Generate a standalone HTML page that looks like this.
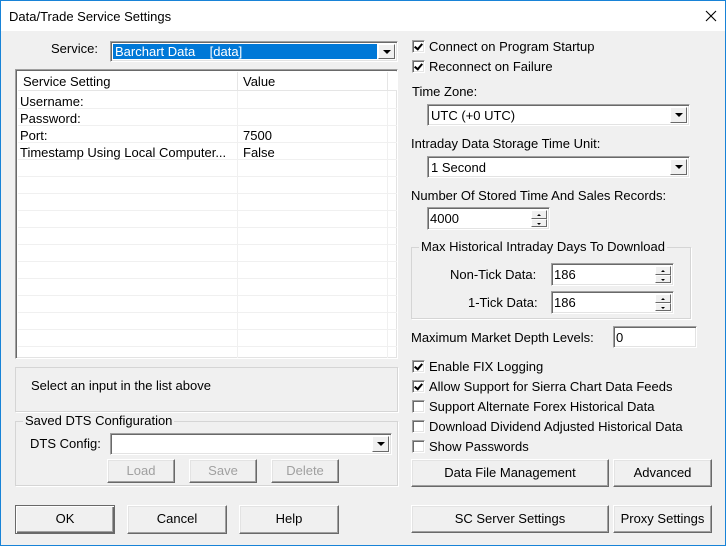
<!DOCTYPE html>
<html><head><style>
*{box-sizing:border-box;margin:0;padding:0}
body{width:726px;height:546px;background:#f0f0f0;font-family:"Liberation Sans",sans-serif;font-size:13px;color:#000;position:relative;overflow:hidden}
.a{position:absolute;white-space:nowrap}
.frame{position:absolute;left:0;top:0;width:726px;height:546px;border:1px solid #1883d7;border-top:none;pointer-events:none}
.title{position:absolute;left:0;top:0;width:726px;height:31px;background:#fff;border-top:1px solid #1883d7}
.sunk{position:absolute;background:#fff;border-top:1px solid #a0a0a0;border-left:1px solid #a0a0a0;border-bottom:1px solid #fff;border-right:1px solid #fff;box-shadow:inset 1px 1px 0 #696969,inset -1px -1px 0 #e3e3e3}
.arrow{position:absolute;right:2px;top:2px;bottom:2px;width:17px;background:#f0f0f0;border-top:1px solid #fff;border-left:1px solid #fff;border-right:1px solid #696969;border-bottom:1px solid #696969}
.arrow:after{content:"";position:absolute;left:4px;top:50%;margin-top:-2px;border-left:4px solid transparent;border-right:4px solid transparent;border-top:4px solid #000}
.spin{position:absolute;right:2px;top:2px;bottom:2px;width:16px}
.spin div{height:50%;background:#f0f0f0;border-top:1px solid #fff;border-left:1px solid #fff;border-right:1px solid #696969;border-bottom:1px solid #696969;position:relative}
.spin div:after{content:"";position:absolute;left:5px;top:3px;border-left:2px solid transparent;border-right:2px solid transparent}
.spin .u:after{border-bottom:2px solid #000}
.spin .d:after{border-top:2px solid #000}
.btn{position:absolute;background:#f0f0f0;border-top:1px solid #fff;border-left:1px solid #fff;border-right:1px solid #696969;border-bottom:1px solid #696969;box-shadow:inset -1px -1px 0 #a0a0a0,inset 1px 1px 0 #e3e3e3;text-align:center}
.dis{color:#a0a0a0}
.grp{position:absolute;border:1px solid #d5d5d5;box-shadow:1px 1px 0 #fff}
.grp span{position:absolute;top:-9px;left:7px;background:#f0f0f0;padding:0 2px}
.cb{position:absolute;width:13px;height:13px;background:#fff;border-top:1px solid #a0a0a0;border-left:1px solid #a0a0a0;border-right:1px solid #fff;border-bottom:1px solid #fff;box-shadow:inset 1px 1px 0 #696969,inset -1px -1px 0 #e3e3e3}
.cb.c:after{content:"";position:absolute;left:3px;top:1px;width:3px;height:6px;border-right:2px solid #000;border-bottom:2px solid #000;transform:rotate(40deg)}
.row{position:absolute;left:2px;width:380px;height:17px;border-bottom:1px solid #f0f0f0}
</style></head><body>
<div class="title"></div>
<div class="a" style="left:9px;top:9px">Data/Trade Service Settings</div>
<svg class="a" style="left:705px;top:10px" width="12" height="12"><path d="M1 1L11 11M11 1L1 11" stroke="#000" stroke-width="1.1"/></svg>

<div class="a" style="left:51px;top:41px">Service:</div>
<div class="sunk" style="left:110px;top:41px;width:288px;height:21px"><div style="position:absolute;left:2px;top:2px;right:20px;bottom:2px;background:#0078d7;color:#fff;padding:0 0 0 2px;line-height:15px">Barchart Data &nbsp;&nbsp;&nbsp;[data]</div><div class="arrow"></div></div>

<div class="sunk" style="left:15px;top:69px;width:383px;height:290px;overflow:hidden">
 <div style="position:absolute;left:2px;top:2px;width:385px;height:19px;background:#fff;border-bottom:1px solid #e5e5e5"></div>
 <div style="position:absolute;left:221px;top:2px;width:1px;height:19px;background:#e5e5e5"></div>
 <div style="position:absolute;left:371px;top:2px;width:1px;height:19px;background:#e5e5e5"></div>
 <div class="a" style="left:7px;top:4px">Service Setting</div>
 <div class="a" style="left:227px;top:4px">Value</div>
 <div class="row" style="top:22px"></div><div class="row" style="top:39px"></div><div class="row" style="top:56px"></div><div class="row" style="top:73px"></div><div class="row" style="top:90px"></div><div class="row" style="top:107px"></div><div class="row" style="top:124px"></div><div class="row" style="top:141px"></div><div class="row" style="top:158px"></div><div class="row" style="top:175px"></div><div class="row" style="top:192px"></div><div class="row" style="top:209px"></div><div class="row" style="top:226px"></div><div class="row" style="top:243px"></div><div class="row" style="top:260px"></div>
 <div style="position:absolute;left:221px;top:21px;width:1px;height:270px;background:#f0f0f0"></div>
 <div style="position:absolute;left:371px;top:21px;width:1px;height:270px;background:#f0f0f0"></div>
 <div class="a" style="left:4px;top:24px">Username:</div>
 <div class="a" style="left:4px;top:41px">Password:</div>
 <div class="a" style="left:4px;top:58px">Port:</div><div class="a" style="left:227px;top:58px">7500</div>
 <div class="a" style="left:4px;top:75px">Timestamp Using Local Computer...</div><div class="a" style="left:227px;top:75px">False</div>
</div>

<div class="grp" style="left:15px;top:367px;width:383px;height:45px"></div>
<div class="a" style="left:31px;top:378px">Select an input in the list above</div>

<div class="grp" style="left:15px;top:421px;width:383px;height:65px"><span>Saved DTS Configuration</span></div>
<div class="a" style="left:30px;top:436px">DTS Config:</div>
<div class="sunk" style="left:110px;top:433px;width:282px;height:22px"><div class="arrow"></div></div>
<div class="btn dis" style="left:107px;top:459px;width:68px;height:24px;line-height:21px">Load</div>
<div class="btn dis" style="left:189px;top:459px;width:68px;height:24px;line-height:21px">Save</div>
<div class="btn dis" style="left:271px;top:459px;width:68px;height:24px;line-height:21px">Delete</div>

<div class="btn" style="left:15px;top:505px;width:100px;height:29px;line-height:26px;border:1px solid #696969;box-shadow:inset 1px 1px 0 #fff,inset -1px -1px 0 #696969,inset -2px -2px 0 #a0a0a0">OK</div>
<div class="btn" style="left:127px;top:505px;width:100px;height:29px;line-height:26px">Cancel</div>
<div class="btn" style="left:239px;top:505px;width:100px;height:29px;line-height:26px">Help</div>

<div class="cb c" style="left:412px;top:40px"></div><div class="a" style="left:429px;top:39px">Connect on Program Startup</div>
<div class="cb c" style="left:412px;top:60px"></div><div class="a" style="left:429px;top:59px">Reconnect on Failure</div>
<div class="a" style="left:412px;top:84px">Time Zone:</div>
<div class="sunk" style="left:427px;top:104px;width:263px;height:22px"><div class="a" style="left:3px;top:3px">UTC (+0 UTC)</div><div class="arrow"></div></div>
<div class="a" style="left:411px;top:136px">Intraday Data Storage Time Unit:</div>
<div class="sunk" style="left:427px;top:156px;width:263px;height:22px"><div class="a" style="left:3px;top:3px">1 Second</div><div class="arrow"></div></div>
<div class="a" style="left:411px;top:188px">Number Of Stored Time And Sales Records:</div>
<div class="sunk" style="left:427px;top:207px;width:123px;height:23px"><div class="a" style="left:2px;top:3px">4000</div><div class="spin"><div class="u"></div><div class="d"></div></div></div>

<div class="grp" style="left:411px;top:247px;width:280px;height:72px"><span>Max Historical Intraday Days To Download</span></div>
<div class="a" style="left:450px;top:267px">Non-Tick Data:</div>
<div class="sunk" style="left:551px;top:263px;width:123px;height:23px"><div class="a" style="left:2px;top:3px">186</div><div class="spin"><div class="u"></div><div class="d"></div></div></div>
<div class="a" style="left:468px;top:295px">1-Tick Data:</div>
<div class="sunk" style="left:551px;top:291px;width:123px;height:23px"><div class="a" style="left:2px;top:3px">186</div><div class="spin"><div class="u"></div><div class="d"></div></div></div>

<div class="a" style="left:411px;top:330px">Maximum Market Depth Levels:</div>
<div class="sunk" style="left:613px;top:326px;width:84px;height:22px"><div class="a" style="left:2px;top:3px">0</div></div>

<div class="cb c" style="left:412px;top:360px"></div><div class="a" style="left:429px;top:359px">Enable FIX Logging</div>
<div class="cb c" style="left:412px;top:380px"></div><div class="a" style="left:429px;top:379px">Allow Support for Sierra Chart Data Feeds</div>
<div class="cb" style="left:412px;top:400px"></div><div class="a" style="left:429px;top:399px">Support Alternate Forex Historical Data</div>
<div class="cb" style="left:412px;top:420px"></div><div class="a" style="left:429px;top:419px">Download Dividend Adjusted Historical Data</div>
<div class="cb" style="left:412px;top:440px"></div><div class="a" style="left:429px;top:439px">Show Passwords</div>

<div class="btn" style="left:411px;top:459px;width:198px;height:28px;line-height:25px">Data File Management</div>
<div class="btn" style="left:613px;top:459px;width:99px;height:28px;line-height:25px">Advanced</div>
<div class="btn" style="left:411px;top:505px;width:198px;height:28px;line-height:25px">SC Server Settings</div>
<div class="btn" style="left:613px;top:505px;width:99px;height:28px;line-height:25px">Proxy Settings</div>
<div class="frame"></div>
</body></html>
